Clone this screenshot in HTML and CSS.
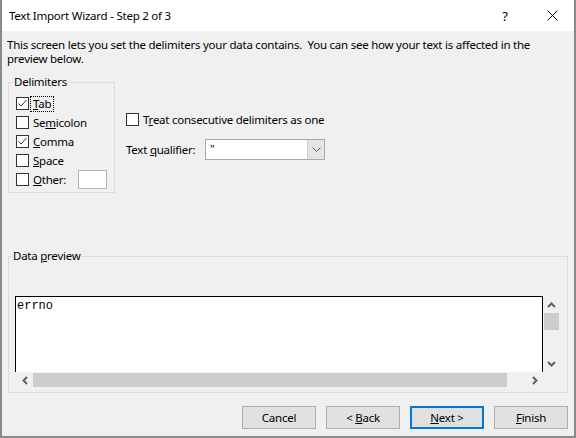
FILE: index.html
```html
<!DOCTYPE html>
<html>
<head>
<meta charset="utf-8">
<link rel="stylesheet" href="styles.css">
</head>
<body>
<div class="window">
  <div class="titlebar">
    <span class="title">Text Import Wizard - Step 2 of 3</span>
    <span class="capbtn help">?</span>
    <span class="capbtn close"><svg width="11" height="11" viewBox="0 0 11 11"><path d="M0.5 0.5L10.5 10.5M10.5 0.5L0.5 10.5" stroke="#000" stroke-width="1" fill="none"/></svg></span>
  </div>
  <div class="body">
    <p class="desc">This screen lets you set the delimiters your data contains.&nbsp; You can see how your text is affected in the<br>preview below.</p>
    <div class="options">
      <fieldset class="group delims">
        <legend>Delimiters</legend>
        <div class="row"><span class="cb"><svg width="11" height="11" viewBox="0 0 11 11"><path d="M1.5 5.5L4 8L9.5 2" stroke="#333" stroke-width="1" fill="none"/></svg></span><span class="lbl focus"><u>T</u>ab</span></div>
        <div class="row"><span class="cb"></span><span class="lbl">Se<u>m</u>icolon</span></div>
        <div class="row"><span class="cb"><svg width="11" height="11" viewBox="0 0 11 11"><path d="M1.5 5.5L4 8L9.5 2" stroke="#333" stroke-width="1" fill="none"/></svg></span><span class="lbl"><u>C</u>omma</span></div>
        <div class="row"><span class="cb"></span><span class="lbl"><u>S</u>pace</span></div>
        <div class="row"><span class="cb"></span><span class="lbl"><u>O</u>ther:</span><span class="textbox"></span></div>
      </fieldset>
      <div class="right">
        <div class="row treat"><span class="cb"></span><span class="lbl">T<u>r</u>eat consecutive delimiters as one</span></div>
        <div class="qual">
          <span class="qlabel">Text <u>q</u>ualifier:</span>
          <div class="combo"><span class="val">"</span><span class="drop"><svg width="9" height="5" viewBox="0 0 9 5"><path d="M0.5 0.5L4.5 4.5L8.5 0.5" stroke="#606060" stroke-width="1" fill="none"/></svg></span></div>
        </div>
      </div>
    </div>
    <fieldset class="group preview">
      <legend>Data <u>p</u>review</legend>
      <div class="grid">
        <div class="list"><pre class="mono">errno</pre></div>
        <div class="vscroll">
          <span class="arrow"><svg width="9" height="6" viewBox="0 0 9 6"><path d="M1 5L4.5 1.5L8 5" stroke="#606060" stroke-width="2" fill="none"/></svg></span>
          <span class="vthumb"></span>
          <span class="vtrack"></span>
          <span class="arrow"><svg width="9" height="6" viewBox="0 0 9 6"><path d="M1 1L4.5 4.5L8 1" stroke="#606060" stroke-width="2" fill="none"/></svg></span>
        </div>
        <div class="hscroll">
          <span class="harrow"><svg width="6" height="9" viewBox="0 0 6 9"><path d="M5 1L1.5 4.5L5 8" stroke="#606060" stroke-width="2" fill="none"/></svg></span>
          <span class="hthumb"></span>
          <span class="htrack"></span>
          <span class="harrow"><svg width="6" height="9" viewBox="0 0 6 9"><path d="M1 1L4.5 4.5L1 8" stroke="#606060" stroke-width="2" fill="none"/></svg></span>
        </div>
        <div class="corner"></div>
      </div>
    </fieldset>
    <div class="buttons">
      <button class="btn">Cancel</button>
      <button class="btn">&lt; <u>B</u>ack</button>
      <button class="btn default"><u>N</u>ext &gt;</button>
      <button class="btn"><u>F</u>inish</button>
    </div>
  </div>
</div>
</body>
</html>
```
FILE: styles.css
```css
* { box-sizing: border-box; }
html, body { margin: 0; padding: 0; }
body {
  font-family: "Noto Sans", "Liberation Sans", sans-serif;
  font-size: 11.5px;
  letter-spacing: -0.24px;
  line-height: 16px;
  color: #000;
  background: #f0f0f0;
}
.window {
  width: 576px;
  height: 438px;
  border-left: 2px solid #8a8a8a;
  border-right: 2px solid #8a8a8a;
  border-bottom: 2px solid #8a8a8a;
  background: #f0f0f0;
  display: flex;
  flex-direction: column;
  overflow: hidden;
}
.titlebar {
  height: 31px;
  flex: 0 0 31px;
  background: #fff;
  display: flex;
  align-items: center;
  padding-left: 7px;
}
.title { flex: 1; }
.capbtn {
  width: 46px;
  height: 31px;
  display: flex;
  align-items: center;
  justify-content: center;
}
.help { font-size: 13px; margin-right: -3px; }
.close { margin-left: 3px; padding-left: 2px; }
.body {
  padding: 7px 7px 0 6px;
}
.desc {
  margin: 0 0 0 -1px;
  line-height: 14px;
  white-space: nowrap;
}
.options {
  display: flex;
  margin-top: 8px;
  align-items: flex-start;
}
.group {
  margin: 0;
  border: 1px solid #dcdcdc;
  min-width: 0;
}
.group legend {
  line-height: 16px;
  padding: 0 1px;
  margin-left: -3px;
}
.delims {
  width: 107px;
  padding: 4px 7px 3px 7px;
}
.row {
  height: 19px;
  display: flex;
  align-items: center;
  white-space: nowrap;
}
.cb {
  width: 13px;
  height: 13px;
  border: 1px solid #333;
  background: #fff;
  flex: 0 0 13px;
  display: flex;
  align-items: center;
  justify-content: center;
}
.lbl {
  margin-left: 4px;
  line-height: 14px;
}
.focus {
  outline: 1px dotted #000;
  outline-offset: 0;
  margin-left: 2px;
  padding: 0 2px;
}
.textbox {
  width: 30px;
  height: 19px;
  margin-left: 12px;
  background: #fff;
  border: 1px solid #b4b4b4;
}
.right {
  margin-left: 11px;
}
.treat { margin-top: 36px; }
.qual {
  margin-top: 10px;
  display: flex;
  align-items: center;
  height: 21px;
  white-space: nowrap;
}
.qlabel { width: 79px; }
.combo {
  width: 120px;
  height: 21px;
  border: 1px solid #a9a9a9;
  background: #fff;
  display: flex;
}
.val { flex: 1; padding-left: 4px; line-height: 17px; }
.drop {
  width: 17px;
  background: #e5e5e5;
  border-left: 1px solid #d0d0d0;
  display: flex;
  align-items: center;
  justify-content: center;
}
.preview {
  margin-top: 55px;
  width: 560px;
  padding: 32px 6px 4px 6px;
}
.grid {
  display: grid;
  grid-template-columns: 528px 17px;
  grid-template-rows: 76px 16px;
}
.list {
  background: #fff;
  border: 1px solid #000;
  border-bottom: none;
}
.mono {
  margin: 0;
  padding: 3px 0 0 1px;
  font-family: "Liberation Mono", monospace;
  font-size: 12px;
  letter-spacing: 0;
  line-height: 13px;
}
.vscroll {
  display: flex;
  flex-direction: column;
  background: #f0f0f0;
}
.arrow {
  height: 17px;
  flex: 0 0 17px;
  display: flex;
  align-items: center;
  justify-content: center;
}
.vthumb {
  height: 17px;
  margin: 0 1px;
  background: #cdcdcd;
}
.vtrack { flex: 1; }
.hscroll {
  display: flex;
  background: #f0f0f0;
  padding-left: 1px;
}
.harrow {
  width: 17px;
  flex: 0 0 17px;
  display: flex;
  align-items: center;
  justify-content: center;
}
.hthumb {
  width: 474px;
  margin: 1px 0;
  background: #cdcdcd;
}
.htrack { flex: 1; }
.corner { background: #f0f0f0; }
.buttons {
  display: flex;
  justify-content: flex-end;
  gap: 10px;
  margin-top: 13px;
  margin-right: -1px;
}
.btn {
  width: 74px;
  height: 23px;
  background: #e1e1e1;
  border: 1px solid #adadad;
  font-family: "Noto Sans", "Liberation Sans", sans-serif;
  font-size: 11.5px;
  letter-spacing: -0.24px;
  color: #000;
  padding: 0;
}
.btn.default {
  border: 2px solid #0078d7;
}
```
